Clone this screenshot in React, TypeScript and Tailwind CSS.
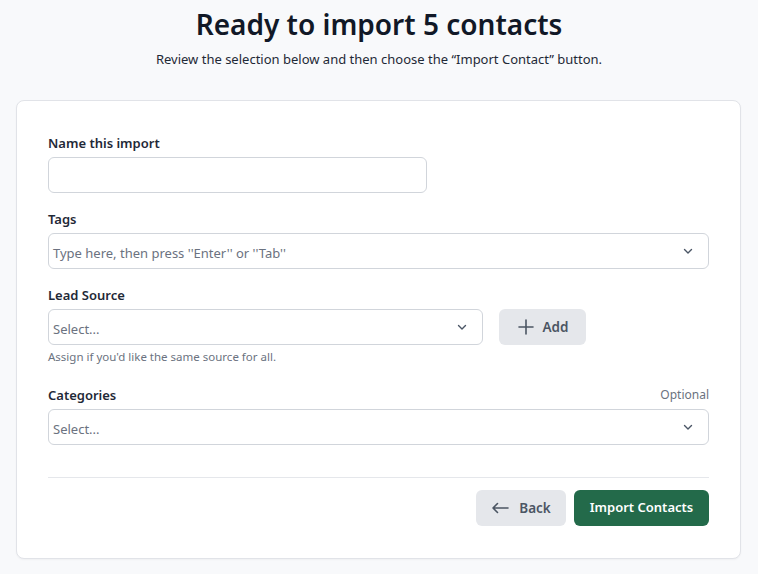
import React from "react";

function Chevron() {
  return (
    <svg width="12" height="12" viewBox="0 0 12 12" fill="none" className="text-gray-600">
      <path d="M2.5 4.5L6 8l3.5-3.5" stroke="currentColor" strokeWidth="1.4" strokeLinecap="round" strokeLinejoin="round" />
    </svg>
  );
}

function SelectBox({ placeholder, className = "" }: { placeholder: string; className?: string }) {
  return (
    <div className={`h-[36px] rounded-[6px] border border-[#d1d5db] bg-white flex items-center justify-between pl-[4px] pr-[14px] ${className}`}>
      <span className="pt-[3px] text-[13px] leading-[18px] text-[#6b7280]">{placeholder}</span>
      <Chevron />
    </div>
  );
}

export default function App() {
  return (
    <div className="min-h-[574px] bg-[#f8f9fb] px-[16px] pt-[6px] pb-[16px]" style={{ fontFamily: '"Noto Sans", "Open Sans", sans-serif' }}>
      <h1 className="text-center text-[28px] leading-[36px] font-semibold text-[#111827]">Ready to import 5 contacts</h1>
      <p className="mt-[7px] text-center text-[13px] leading-[20px] text-[#1f2937]">
        Review the selection below and then choose the “Import Contact” button.
      </p>
      <div className="mt-[31px] w-[725px] rounded-[8px] border border-[#e1e3e8] bg-white px-[31px] py-[32px] shadow-[0_1px_2px_rgba(0,0,0,0.04)]">
        <label className="block text-[13px] leading-[20px] font-semibold text-[#1f2937]">Name this import</label>
        <div className="mt-[4px] h-[36px] w-[379px] rounded-[6px] border border-[#d1d5db] bg-white" />

        <label className="mt-[16px] block text-[13px] leading-[20px] font-semibold text-[#1f2937]">Tags</label>
        <SelectBox className="mt-[4px]" placeholder={"Type here, then press ''Enter'' or ''Tab''"} />

        <label className="mt-[16px] block text-[13px] leading-[20px] font-semibold text-[#1f2937]">Lead Source</label>
        <div className="mt-[4px] flex gap-[16px]">
          <SelectBox className="w-[435px]" placeholder="Select..." />
          <button className="h-[36px] w-[87px] rounded-[6px] bg-[#e5e7eb] flex items-center justify-center gap-[8px] text-[13.5px] font-semibold text-[#4b5563]">
            <svg width="18" height="18" viewBox="0 0 18 18" fill="none">
              <path d="M9 2v14M2 9h14" stroke="#4b5563" strokeWidth="1.6" strokeLinecap="round" />
            </svg>
            Add
          </button>
        </div>
        <p className="mt-[4px] text-[11.5px] leading-[16px] text-[#6b7280]">Assign if you'd like the same source for all.</p>

        <div className="mt-[20px] flex items-end justify-between">
          <label className="block text-[13px] leading-[20px] font-semibold text-[#1f2937]">Categories</label>
          <span className="text-[12px] leading-[20px] text-[#6b7280]">Optional</span>
        </div>
        <SelectBox className="mt-[4px]" placeholder="Select..." />

        <div className="mt-[32px] border-t border-[#e5e7eb]" />
        <div className="mt-[12px] flex justify-end gap-[8px]">
          <button className="h-[36px] w-[90px] rounded-[6px] bg-[#e5e7eb] flex items-center justify-center gap-[10px] text-[13.5px] font-semibold text-[#4b5563]">
            <svg width="18" height="12" viewBox="0 0 18 12" fill="none">
              <path d="M17 6H2M6.5 1.5L2 6l4.5 4.5" stroke="#4b5563" strokeWidth="1.6" strokeLinecap="round" strokeLinejoin="round" />
            </svg>
            Back
          </button>
          <button className="h-[36px] w-[135px] rounded-[6px] bg-[#236a4a] text-[13px] font-semibold text-white">
            Import Contacts
          </button>
        </div>
      </div>
    </div>
  );
}
